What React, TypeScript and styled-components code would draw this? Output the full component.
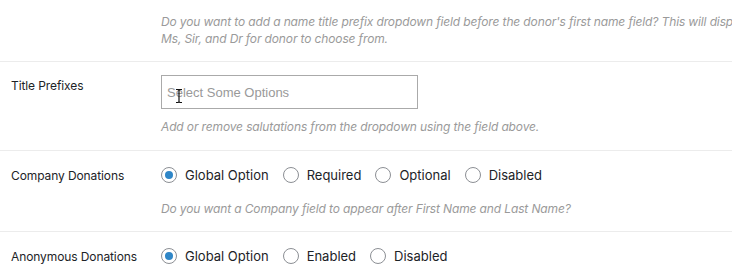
import React from "react";
import styled, { createGlobalStyle } from "styled-components";

const Global = createGlobalStyle`
  html, body { margin: 0; padding: 0; background: #fff; overflow: hidden; }
  body { font-family: Inter, "Noto Sans", sans-serif; color: #1d2327; }
`;

const Page = styled.div`
  width: 732px;
  height: 275px;
  overflow: hidden;
  background: #fff;
`;

const Row = styled.div<{ $pt: number; $pb: number }>`
  display: grid;
  grid-template-columns: 161px 1fr;
  padding: ${(p) => p.$pt}px 0 ${(p) => p.$pb}px 0;
  border-top: 1px solid #ececec;
  &:first-child { border-top: none; }
`;

const Label = styled.div<{ $pt: number }>`
  padding: ${(p) => p.$pt}px 0 0 11px;
  font-size: 12px;
  line-height: 17px;
  letter-spacing: -0.1px;
  color: #1d2327;
  white-space: nowrap;
`;

const Field = styled.div`
  display: flex;
  flex-direction: column;
  min-width: 0;
`;

const Desc = styled.p<{ $mt: number }>`
  margin: ${(p) => p.$mt}px 0 0 0;
  font-size: 12px;
  line-height: 17px;
  letter-spacing: -0.13px;
  font-style: italic;
  color: #9a9a9a;
  white-space: nowrap;
`;

const DescLine = styled.span`
  display: block;
`;

const SelectBox = styled.div`
  position: relative;
  box-sizing: border-box;
  width: 257px;
  height: 34px;
  border: 1px solid #aaa;
  background: #fff;
  display: flex;
  align-items: center;
  padding-left: 5px;
  font-family: "Liberation Sans", Arial, sans-serif;
  font-size: 13px;
  color: #999;
`;

const Cursor = styled.svg`
  position: absolute;
  left: 13px;
  top: 13px;
`;

const RadioGroup = styled.div`
  display: flex;
  align-items: center;
  gap: 14px;
  height: 22px;
`;

const RadioItem = styled.label`
  display: flex;
  align-items: center;
  gap: 8px;
  font-size: 13px;
  color: #1d2327;
  white-space: nowrap;
`;

const Circle = styled.span<{ $checked?: boolean }>`
  box-sizing: border-box;
  width: 16px;
  height: 16px;
  border-radius: 50%;
  border: 1px solid #8c8f94;
  background: #fff;
  display: flex;
  align-items: center;
  justify-content: center;
  &::after {
    content: "";
    width: 8px;
    height: 8px;
    border-radius: 50%;
    background: ${(p) => (p.$checked ? "#2f86c7" : "transparent")};
  }
`;

type RadioProps = { options: string[]; checked: number };

const Radios = ({ options, checked }: RadioProps) => (
  <RadioGroup>
    {options.map((o, i) => (
      <RadioItem key={o}>
        <Circle $checked={i === checked} />
        {o}
      </RadioItem>
    ))}
  </RadioGroup>
);

export default function App() {
  return (
    <Page>
      <Global />
      <Row $pt={13} $pb={14}>
        <Label $pt={0} />
        <Field>
          <Desc $mt={0}>
            <DescLine>
              Do you want to add a name title prefix dropdown field before the donor's first name field? This will display Mr, Mrs, Miss,
            </DescLine>
            <DescLine>Ms, Sir, and Dr for donor to choose from.</DescLine>
          </Desc>
        </Field>
      </Row>
      <Row $pt={13} $pb={15}>
        <Label $pt={2}>Title Prefixes</Label>
        <Field>
          <SelectBox>
            Select Some Options
            <Cursor width="8" height="14" viewBox="0 0 8 14">
              <path d="M1 0.5h2.2l0.8 0.8l0.8-0.8H7M4 1.3v11.4M1 13.5h2.2l0.8-0.8l0.8 0.8H7" fill="none" stroke="#111" strokeWidth="1.2" />
            </Cursor>
          </SelectBox>
          <Desc $mt={9}>Add or remove salutations from the dropdown using the field above.</Desc>
        </Field>
      </Row>
      <Row $pt={13} $pb={14}>
        <Label $pt={3}>Company Donations</Label>
        <Field>
          <Radios options={["Global Option", "Required", "Optional", "Disabled"]} checked={0} />
          <Desc $mt={14}>Do you want a Company field to appear after First Name and Last Name?</Desc>
        </Field>
      </Row>
      <Row $pt={13} $pb={13}>
        <Label $pt={3}>Anonymous Donations</Label>
        <Field>
          <Radios options={["Global Option", "Enabled", "Disabled"]} checked={0} />
        </Field>
      </Row>
    </Page>
  );
}
